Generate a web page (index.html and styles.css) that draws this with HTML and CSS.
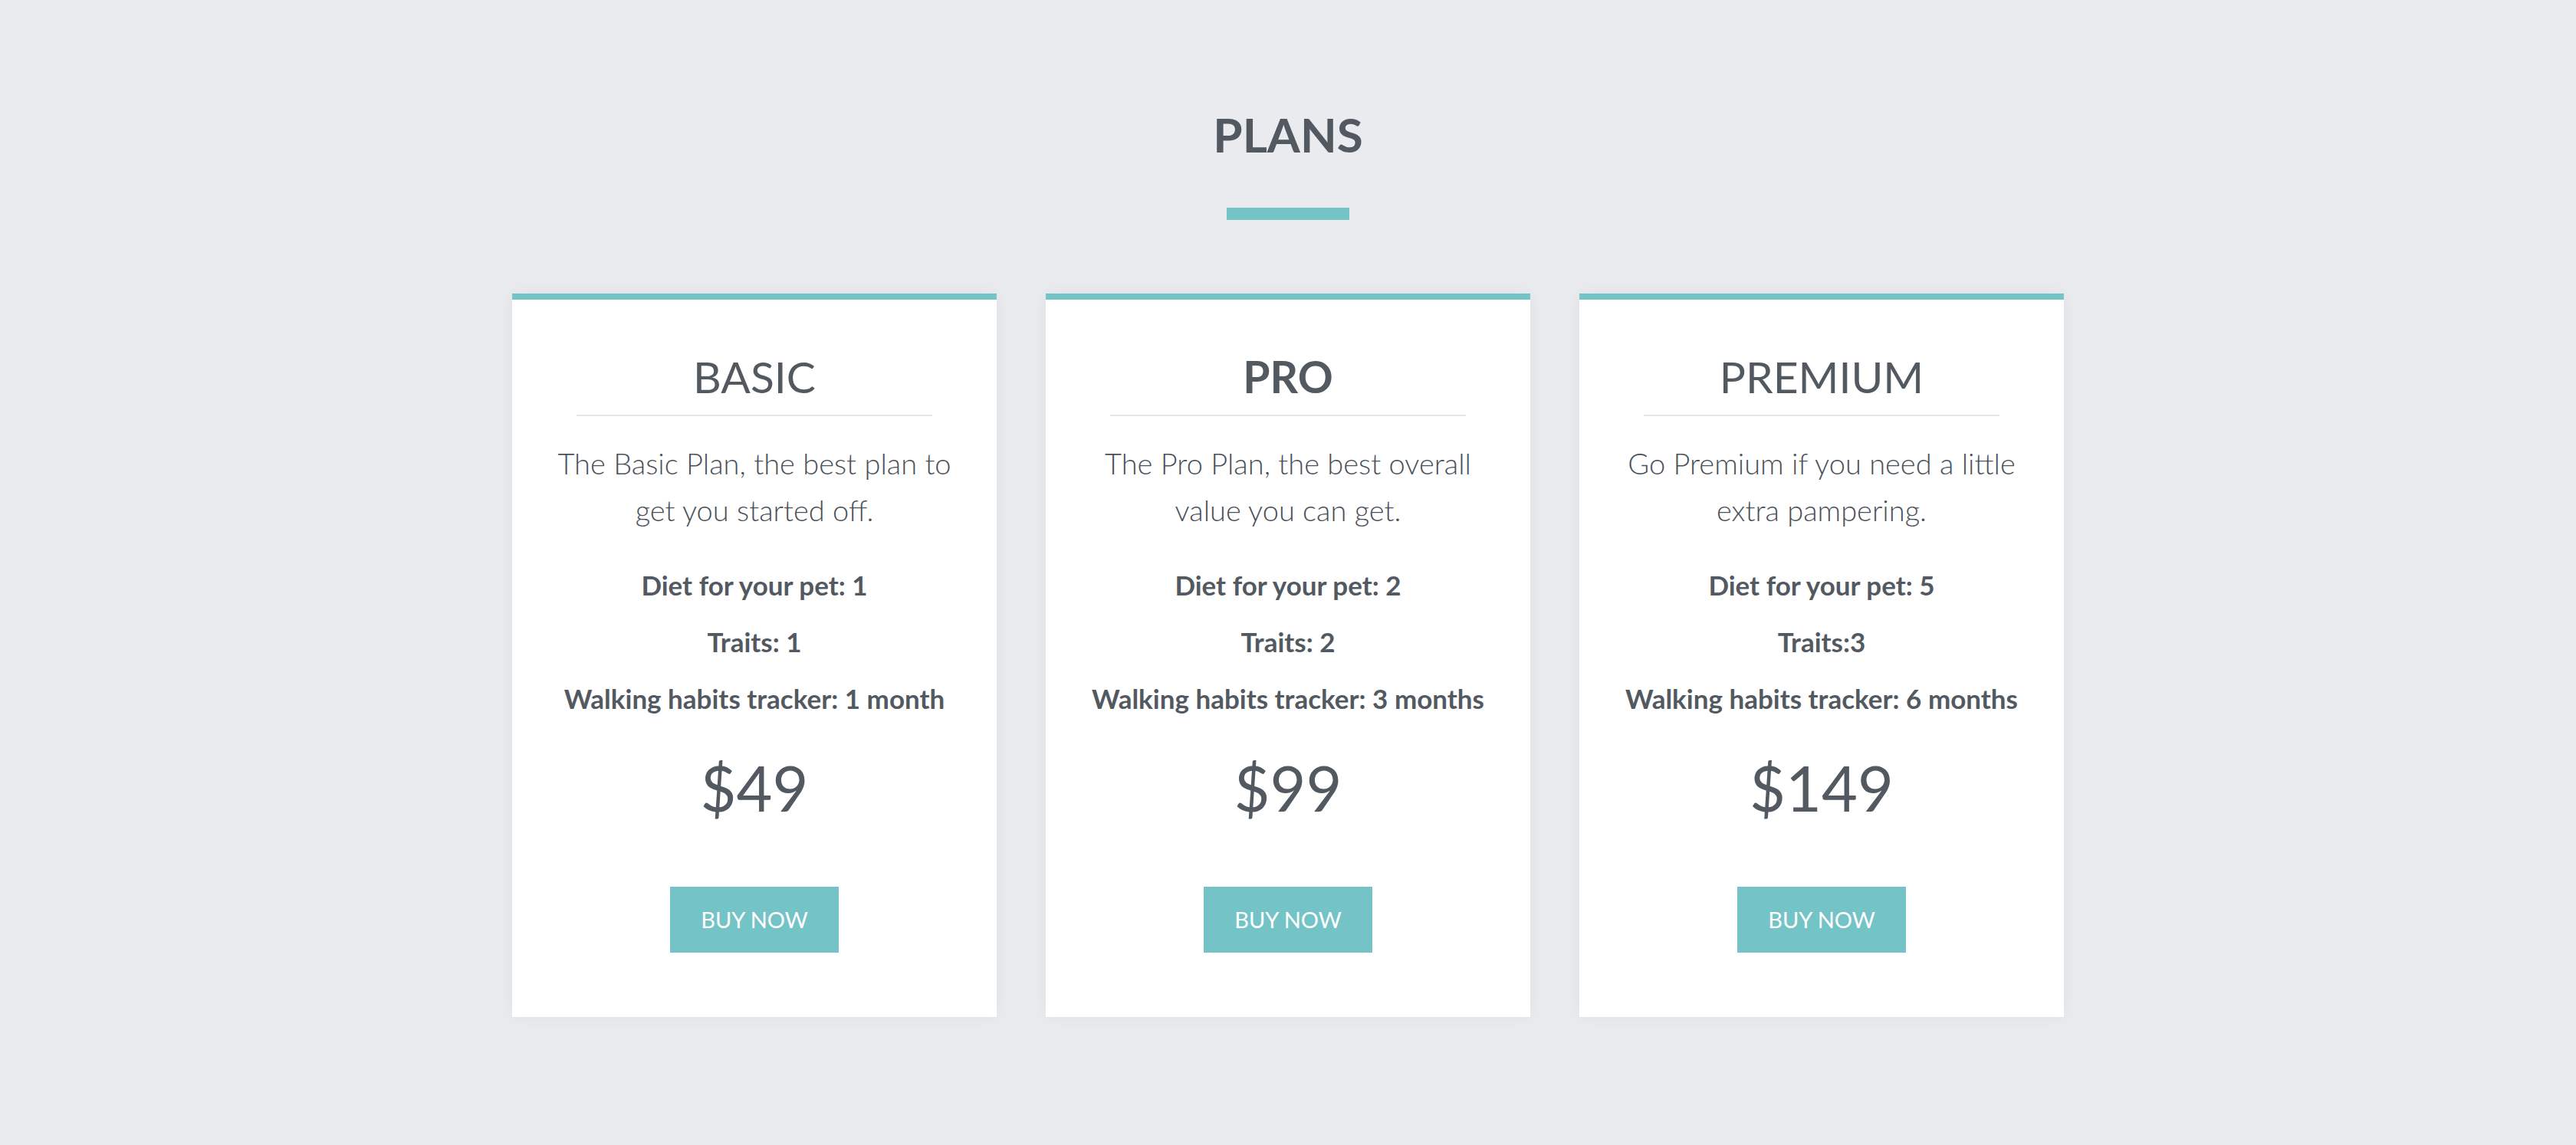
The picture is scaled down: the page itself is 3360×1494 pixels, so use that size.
FILE: index.html
```html
<!DOCTYPE html>
<html lang="en">
<head>
<meta charset="utf-8">
<title>Plans</title>
<link rel="stylesheet" href="styles.css">
</head>
<body>
<section class="plans">
  <h1 class="plans-title">PLANS</h1>
  <div class="plans-bar"></div>
  <div class="plans-grid">
    <div class="card">
      <h2 class="card-title">BASIC</h2>
      <p class="card-desc">The Basic Plan, the best plan to get you started off.</p>
      <ul class="card-features">
        <li>Diet for your pet: 1</li>
        <li>Traits: 1</li>
        <li>Walking habits tracker: 1 month</li>
      </ul>
      <div class="card-price">$49</div>
      <a class="card-btn" href="#">BUY NOW</a>
    </div>
    <div class="card">
      <h2 class="card-title card-title-bold">PRO</h2>
      <p class="card-desc">The Pro Plan, the best overall value you can get.</p>
      <ul class="card-features">
        <li>Diet for your pet: 2</li>
        <li>Traits: 2</li>
        <li>Walking habits tracker: 3 months</li>
      </ul>
      <div class="card-price">$99</div>
      <a class="card-btn" href="#">BUY NOW</a>
    </div>
    <div class="card">
      <h2 class="card-title">PREMIUM</h2>
      <p class="card-desc">Go Premium if you need a little extra pampering.</p>
      <ul class="card-features">
        <li>Diet for your pet: 5</li>
        <li>Traits:3</li>
        <li>Walking habits tracker: 6 months</li>
      </ul>
      <div class="card-price">$149</div>
      <a class="card-btn" href="#">BUY NOW</a>
    </div>
  </div>
</section>
</body>
</html>
```

FILE: styles.css
```css
* {
  box-sizing: border-box;
}

html, body {
  margin: 0;
  padding: 0;
}

body {
  background: #eaebef;
  color: #525961;
  font-family: Lato, "Open Sans", "Liberation Sans", sans-serif;
  min-height: 1494px;
}

.plans {
  display: flex;
  flex-direction: column;
  align-items: center;
  padding-top: 138px;
}

.plans-title {
  margin: 0;
  font-size: 62px;
  font-weight: 700;
  line-height: 1.2;
  letter-spacing: 0;
}

.plans-bar {
  width: 160px;
  height: 16px;
  background: #74c3c7;
  margin-top: 59px;
}

.plans-grid {
  display: flex;
  gap: 64px;
  margin-top: 96px;
}

.card {
  width: 632px;
  background: #fff;
  border-top: 8px solid #74c3c7;
  box-shadow: 0 0 22px rgba(0, 0, 0, 0.05);
  display: flex;
  flex-direction: column;
  align-items: center;
  text-align: center;
  padding: 67px 40px 84px;
}

.card-title {
  margin: 0;
  width: 464px;
  font-size: 57px;
  font-weight: 400;
  line-height: 67px;
  padding-bottom: 16px;
  border-bottom: 2px solid #e4e6e9;
}

.card-title-bold {
  font-weight: 700;
}

.card-desc {
  margin: 31px 0 0;
  color: #4a5159;
  font-size: 38px;
  font-weight: 300;
  line-height: 60.8px;
}

.card-features {
  list-style: none;
  margin: 30px 0 0;
  padding: 0;
  font-size: 35px;
  font-weight: 700;
  line-height: 74px;
}

.card-price {
  margin-top: 32px;
  font-size: 81px;
  font-weight: 400;
  line-height: 96px;
}

.card-btn {
  margin-top: 81px;
  width: 220px;
  height: 86px;
  display: flex;
  align-items: center;
  justify-content: center;
  background: #74c3c7;
  color: #fff;
  text-decoration: none;
  font-size: 29px;
  font-weight: 400;
}
```
